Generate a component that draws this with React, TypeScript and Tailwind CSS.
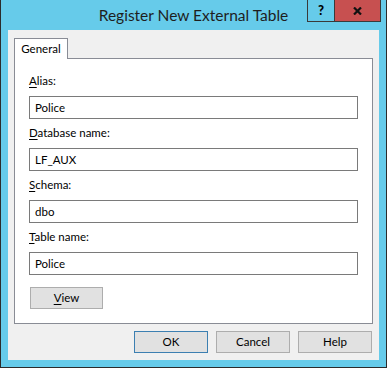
import React from 'react';

const fields = [
  { key: 'A', rest: 'lias:', value: 'Police' },
  { key: 'D', rest: 'atabase name:', value: 'LF_AUX' },
  { key: 'S', rest: 'chema:', value: 'dbo' },
  { key: 'T', rest: 'able name:', value: 'Police' },
];

const App = () => {
  return (
    <div className="w-[387px] h-[368px] bg-[#66cbea] border-x border-b border-[#2b2b2b] flex flex-col font-['Lato',sans-serif] text-[11.5px] text-black">
      {/* Title bar */}
      <div className="relative h-[30px] flex items-center justify-center">
        <span className="text-[15.5px] text-[#1e1e1e] pt-[2px]">Register New External Table</span>
        <div className="absolute top-0 right-[5px] flex">
          <div className="w-[28px] h-[22px] border border-[#3a3a3a] border-t-0 flex items-center justify-center font-black text-[13px]">
            ?
          </div>
          <div className="w-[46px] h-[22px] bg-[#c75050] border border-l-0 border-t-0 border-[#3a3a3a] flex items-center justify-center">
            <svg width="9" height="8" viewBox="0 0 9 8">
              <path d="M1 0.5 L8 7.5 M8 0.5 L1 7.5" stroke="#111" strokeWidth="2.2" />
            </svg>
          </div>
        </div>
      </div>

      {/* Client area */}
      <div className="mx-[7px] h-[330px] bg-[#f0f0f0] flex flex-col px-[6px] pt-[8px]">
        <div className="flex">
          <div className="relative z-10 -mb-px w-[54px] h-[21px] bg-white border border-b-0 border-[#898c95] flex items-center justify-center">
            General
          </div>
        </div>
        <div className="h-[266px] bg-white border border-[#898c95] px-[14px] pt-[14px] flex flex-col gap-[6px]">
          {fields.map((f) => (
            <div key={f.key} className="flex flex-col">
              <label className="h-[16px] leading-[16px] mb-[7px]">
                <u className="underline-offset-2">{f.key}</u>
                {f.rest}
              </label>
              <div className="h-[23px] border border-[#7a7a7a] bg-white px-[5px] flex items-center">{f.value}</div>
            </div>
          ))}
          <div className="mt-[6px]">
            <button className="w-[73px] h-[22px] bg-[#e1e1e1] border border-[#adadad] ml-px">
              <u className="underline-offset-2">V</u>iew
            </button>
          </div>
        </div>
        <div className="flex justify-end gap-[8px] pt-[7px] pr-px">
          <button className="w-[74px] h-[22px] bg-[#e1e1e1] border border-[#3c7fb1]">OK</button>
          <button className="w-[74px] h-[22px] bg-[#e1e1e1] border border-[#adadad]">Cancel</button>
          <button className="w-[74px] h-[22px] bg-[#e1e1e1] border border-[#adadad]">Help</button>
        </div>
      </div>
    </div>
  );
};

export default App;
